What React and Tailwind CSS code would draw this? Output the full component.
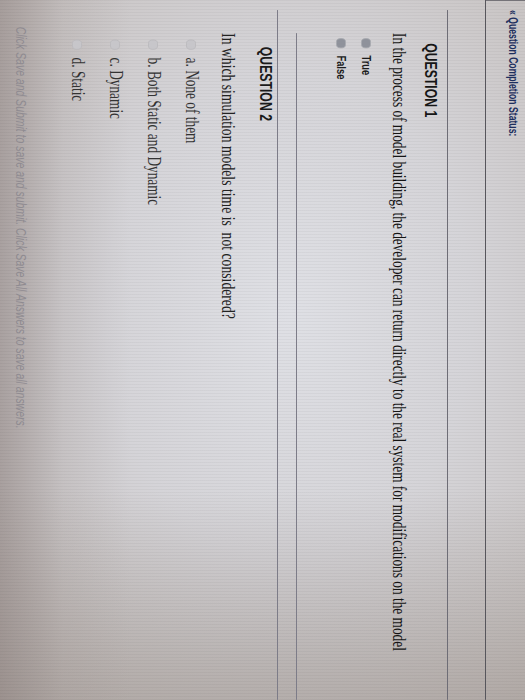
import React from "react";

const sans = "font-['Liberation_Sans',Arial,sans-serif]";
const serif = "font-['Liberation_Serif','Times_New_Roman',serif]";

function Radio({ light }) {
  return (
    <span
      className={
        light
          ? "w-[14px] h-[10px] rounded-full bg-[#c7c6ca] border border-[#bab9bd] shrink-0"
          : "w-[14px] h-[10px] rounded-full bg-[#8f929b] border border-[#a8aab0] shrink-0"
      }
    />
  );
}

export default function App() {
  const answers = ["a. None of them", "b. Both Static and Dynamic", "c. Dynamic", "d. Static"];

  return (
    <div className="w-[525px] h-[700px] overflow-hidden bg-[image:repeating-linear-gradient(0deg,rgba(0,0,0,0.035)_0_1px,transparent_1px_3px),linear-gradient(to_right,rgba(140,128,126,0.55)_0%,rgba(160,150,148,0.2)_12%,transparent_25%),linear-gradient(to_bottom,transparent_70%,rgba(150,140,134,0.45)_100%),radial-gradient(ellipse_at_55%_45%,#dfe0e5_0%,#d5d4d8_45%,#c3bdba_100%)]">
      {/* the photo shows the page turned a quarter turn, a bit squeezed along its lines */}
      <div className="w-[972px] h-[525px] origin-top-left scale-x-[0.72] rotate-90 translate-x-[525px]">
        {/* status bar */}
        <div
          className={`h-[40px] border-l border-b border-[#57565c] pl-[13px] pt-[4px] text-[12px] leading-[16px] font-bold text-[#1d2f5e] ${sans}`}
        >
          « Question Completion Status:
        </div>

        <div className="h-[37px]" />

        {/* question 1 */}
        <section className="ml-[14px] border-t border-[#6e6d76]">
          <h2 className={`mt-[7px] pl-[46px] text-[17px] leading-[20px] font-bold text-[#161616] ${sans}`}>
            QUESTION 1
          </h2>
          <p className={`mt-[10px] pl-[32px] text-[18.5px] leading-[23px] whitespace-nowrap text-[#141414] ${serif}`}>
            In the process of model building, the developer can return directly to the real system for
            modifications on the model
          </p>
          <div className="mt-[11px] pl-[39px] flex flex-col gap-[5px]">
            {["True", "False"].map((label) => (
              <label key={label} className="h-[20px] flex items-center gap-[10px]">
                <Radio />
                <span className={`text-[13px] font-bold text-[#1c1c1c] ${sans}`}>{label}</span>
              </label>
            ))}
          </div>
          <div className="mt-[34px] ml-[32px] border-t border-[#7d7c88]" />
        </section>

        {/* question 2 */}
        <section className="mt-[18px] ml-[14px] border-t border-[#7d7c88]">
          <h2 className={`mt-[2px] pl-[51px] text-[17px] leading-[20px] font-bold text-[#1a1a1a] ${sans}`}>
            QUESTION 2
          </h2>
          <p className={`mt-[16px] pl-[32px] text-[19px] leading-[22px] text-[#222] ${serif}`}>
            In which simulation models time is{"\u00a0"} not considered?
          </p>
          <div className="mt-[16px] pl-[41px] flex flex-col gap-[18px]">
            {answers.map((a) => (
              <label key={a} className="h-[20px] flex items-center gap-[11px]">
                <Radio light />
                <span className={`text-[18.5px] text-[#333] ${serif}`}>{a}</span>
              </label>
            ))}
          </div>
          <p className={`mt-[37px] pl-[23px] text-[14.5px] leading-[18px] italic text-[#8f8b91] ${sans}`}>
            Click Save and Submit to save and submit. Click Save All Answers to save all answers.
          </p>
        </section>
      </div>
    </div>
  );
}
